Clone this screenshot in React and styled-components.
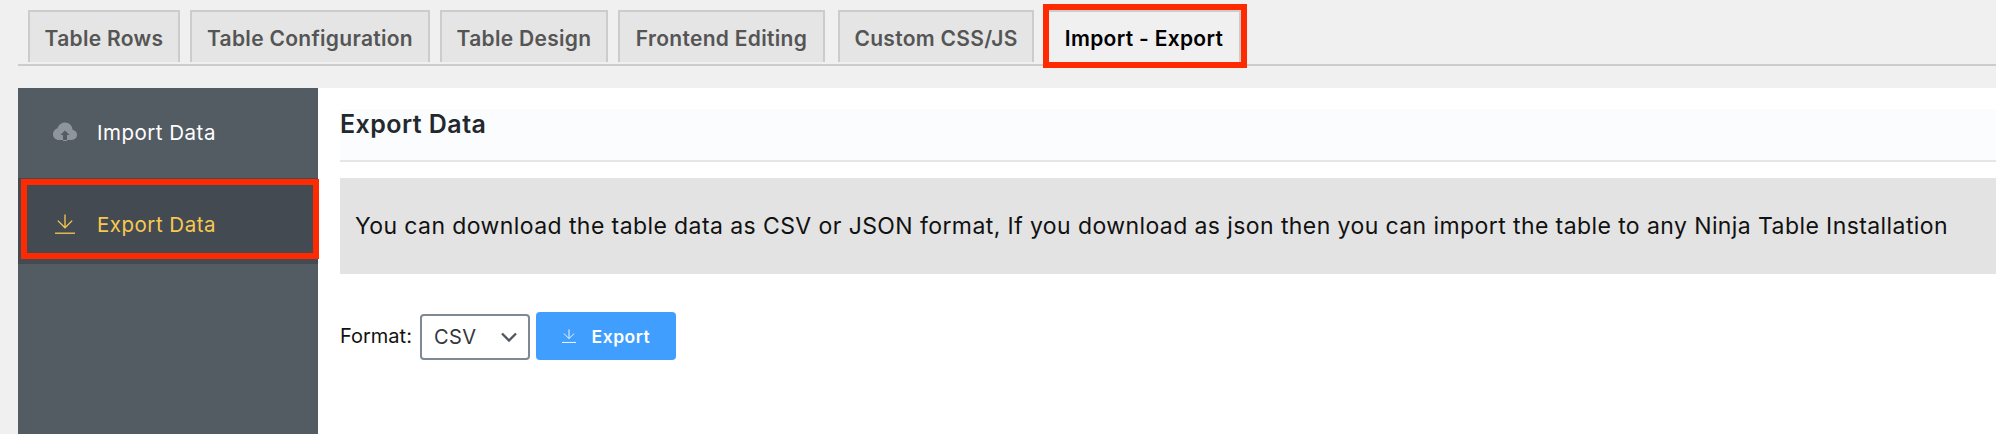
import React from 'react';
import styled, { createGlobalStyle } from 'styled-components';

const GlobalStyle = createGlobalStyle`
	html,
	body {
		margin: 0;
		padding: 0;
		background: #f0f0f1;
		overflow: hidden;
	}

	body {
		font-family: Inter, "Liberation Sans", sans-serif;
	}
`;

const Page = styled.div`
	width: 1996px;
	height: 434px;
	padding-top: 10px;
	box-sizing: border-box;
	overflow: hidden;
`;

const TabBar = styled.div`
	display: flex;
	margin-left: 18px;
	padding: 0 0 2px 10px;
	border-bottom: 2px solid #ccc;
`;

const Tab = styled.div`
	position: relative;
	display: flex;
	align-items: center;
	justify-content: center;
	box-sizing: border-box;
	height: 52px;
	width: ${(p) => p.$width}px;
	margin-right: ${(p) => p.$gap}px;
	padding-top: 2px;
	border: 2px solid #ccc;
	border-bottom: 0;
	background: ${(p) => (p.$active ? '#f0f0f1' : '#e5e5e5')};
	color: ${(p) => (p.$active ? '#000' : '#555')};
	font-size: 21px;
	font-weight: 600;
	letter-spacing: 0.3px;
`;

const TabMark = styled.span`
	position: absolute;
	left: -6px;
	right: -8px;
	top: -8px;
	bottom: -6px;
	border: 6px solid #ff2a00;
`;

const Main = styled.div`
	display: flex;
	margin: 22px 0 0 18px;
	height: 346px;
`;

const Sidebar = styled.div`
	width: 300px;
	flex-shrink: 0;
	background: #535b63;
`;

const MenuItem = styled.div`
	position: relative;
	display: flex;
	align-items: center;
	box-sizing: border-box;
	height: ${(p) => p.$height}px;
	padding-left: ${(p) => p.$pad}px;
	padding-top: ${(p) => (p.$active ? 6 : 0)}px;
	padding-bottom: ${(p) => (p.$active ? 0 : 2)}px;
	background: ${(p) => (p.$active ? '#434a52' : 'transparent')};
	color: ${(p) => (p.$active ? '#f7c94f' : '#fff')};
	font-size: 20.5px;
	letter-spacing: 0.5px;
`;

const MenuLabel = styled.span`
	margin-left: ${(p) => p.$gap}px;
`;

const MenuMark = styled.span`
	position: absolute;
	left: 3px;
	right: -1px;
	top: 1px;
	bottom: 5px;
	border: 6px solid #ff2a00;
`;

const Content = styled.div`
	flex: 1;
	padding: 21px 0 0 22px;
	background: #fff;
`;

const PanelHeader = styled.div`
	display: flex;
	align-items: flex-start;
	box-sizing: border-box;
	height: 53px;
	background: #fbfcfe;
	border-bottom: 2px solid #e6e6e6;
`;

const Title = styled.h3`
	margin: 0;
	color: #23282d;
	font-size: 25px;
	font-weight: 600;
	letter-spacing: 0.45px;
	line-height: 30px;
`;

const Notice = styled.div`
	display: flex;
	align-items: center;
	height: 96px;
	margin-top: 16px;
	padding-left: 15px;
	background: #e3e3e3;
	color: #111;
	font-size: 23px;
	letter-spacing: 0.41px;
`;

const ExportRow = styled.div`
	display: flex;
	align-items: center;
	margin-top: 38px;
`;

const FormatLabel = styled.span`
	margin-right: 8px;
	color: #111;
	font-size: 20px;
`;

const SelectBox = styled.div`
	display: flex;
	align-items: center;
	justify-content: space-between;
	box-sizing: border-box;
	width: 110px;
	height: 46px;
	margin-top: 2px;
	padding: 0 11px 0 12px;
	border: 2px solid #7e8993;
	border-radius: 4px;
	background: #fff;
	color: #32373c;
	font-size: 20px;
	letter-spacing: 0.4px;
`;

const ExportButton = styled.button`
	display: flex;
	align-items: center;
	justify-content: center;
	gap: 16px;
	width: 140px;
	height: 48px;
	margin-left: 6px;
	padding: 0;
	border: 0;
	border-radius: 4px;
	background: #409eff;
	color: #fff;
	font-family: inherit;
	font-size: 17.5px;
	font-weight: 600;
	letter-spacing: 0.5px;
`;

const CloudIcon = () => (
	<svg width="24" height="20" viewBox="0 0 24 20">
		<path
			fill="#8f959c"
			d="M19.6 7.7C19.2 3.4 16 0.5 12 0.5 8.4 0.5 5.4 3 4.6 6.3 2 7 0 9.3 0 12.2 0 15.6 2.7 18 6 18h4v-5H7.4L12 8.4l4.6 4.6H14v5h4.6c3 0 5.4-2.2 5.4-5.2 0-2.5-1.8-4.5-4.4-5.1z"
		/>
		<path fill="#8f959c" d="M10 18h4v1h-4z" />
	</svg>
);

const DownloadIcon = ({ size, color }) => (
	<svg width={size} height={size} viewBox="0 0 20 20" fill="none" stroke={color} strokeWidth="1.3">
		<path d="M10 0.5V13.5" />
		<path d="M2.8 6.6L10 13.8l7.2-7.2" />
		<path d="M0 19.2h20" />
	</svg>
);

const Chevron = () => (
	<svg width="16" height="10" viewBox="0 0 16 10" fill="none" stroke="#50575e" strokeWidth="2.4">
		<path d="M1 1.5l7 7 7-7" />
	</svg>
);

const tabs = [
	{ label: 'Table Rows', width: 152, gap: 10 },
	{ label: 'Table Configuration', width: 240, gap: 10 },
	{ label: 'Table Design', width: 168, gap: 10 },
	{ label: 'Frontend Editing', width: 207, gap: 13 },
	{ label: 'Custom CSS/JS', width: 196, gap: 13 },
	{ label: 'Import - Export', width: 194, gap: 0, active: true },
];

export default function App() {
	return (
		<Page>
			<GlobalStyle />
			<TabBar>
				{tabs.map((tab) => (
					<Tab key={tab.label} $width={tab.width} $gap={tab.gap} $active={tab.active}>
						{tab.label}
						{tab.active && <TabMark />}
					</Tab>
				))}
			</TabBar>
			<Main>
				<Sidebar>
					<MenuItem $height={90} $pad={35}>
						<CloudIcon />
						<MenuLabel $gap={20}>Import Data</MenuLabel>
					</MenuItem>
					<MenuItem $height={86} $pad={37} $active>
						<DownloadIcon size={20} color="#f7c94f" />
						<MenuLabel $gap={22}>Export Data</MenuLabel>
						<MenuMark />
					</MenuItem>
				</Sidebar>
				<Content>
					<PanelHeader>
						<Title>Export Data</Title>
					</PanelHeader>
					<Notice>
						You can download the table data as CSV or JSON format, If you download as json then you can import the table to any Ninja Table Installation
					</Notice>
					<ExportRow>
						<FormatLabel>Format:</FormatLabel>
						<SelectBox>
							CSV
							<Chevron />
						</SelectBox>
						<ExportButton>
							<DownloadIcon size={14} color="#fff" />
							Export
						</ExportButton>
					</ExportRow>
				</Content>
			</Main>
		</Page>
	);
}
